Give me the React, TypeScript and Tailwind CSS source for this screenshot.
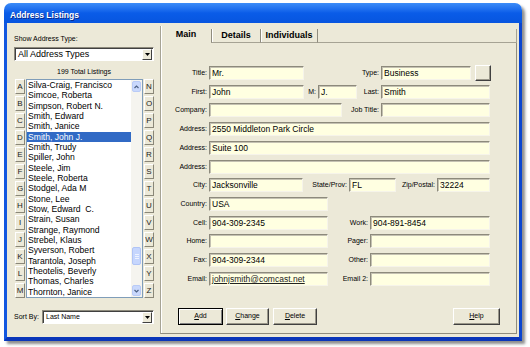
import React from 'react';

const names = [
  'Silva-Craig, Francisco',
  'Simcoe, Roberta',
  'Simpson, Robert N.',
  'Smith, Edward',
  'Smith, Janice',
  'Smith, John J.',
  'Smith, Trudy',
  'Spiller, John',
  'Steele, Jim',
  'Steele, Roberta',
  'Stodgel, Ada M',
  'Stone, Lee',
  'Stow, Edward  C.',
  'Strain, Susan',
  'Strange, Raymond',
  'Strebel, Klaus',
  'Syverson, Robert',
  'Tarantola, Joseph',
  'Theotelis, Beverly',
  'Thomas, Charles',
  'Thornton, Janice',
];

const leftLetters = 'ABCDEFGHIJKLM'.split('');
const rightLetters = 'NOPQRSTUVWXYZ'.split('');

function LetterButton({ letter }: { letter: string }) {
  return (
    <div className="flex h-[15px] w-[10px] items-center justify-center border border-t-white border-l-white border-b-[#8a8778] border-r-[#8a8778] bg-[#ece9d8] text-[8px] leading-none text-[#222]">
      {letter}
    </div>
  );
}

function Arrow() {
  return (
    <svg width="5" height="3" viewBox="0 0 5 3">
      <path d="M0 0h5L2.5 3z" fill="#000" />
    </svg>
  );
}

function Dropdown({ value, className }: { value: string; className: string }) {
  return (
    <div
      className={`flex h-[14px] items-center border border-t-[#8d8a7c] border-l-[#8d8a7c] border-b-white border-r-white bg-white shadow-[inset_1px_1px_0_#404040] ${className}`}
    >
      <span className="flex-1 truncate pl-[3px]">{value}</span>
      <span className="mr-px flex h-[11px] w-[10px] items-center justify-center border border-t-white border-l-white border-b-[#404040] border-r-[#404040] bg-[#ece9d8]">
        <Arrow />
      </span>
    </div>
  );
}

function Lbl({ className, children }: { className: string; children?: React.ReactNode }) {
  return (
    <span className={`shrink-0 whitespace-nowrap pr-[2px] text-right text-[7px] leading-[14px] text-black ${className}`}>
      {children}
    </span>
  );
}

function Field({ className, children }: { className: string; children?: React.ReactNode }) {
  return (
    <div
      className={`h-[14px] shrink-0 overflow-hidden whitespace-nowrap border border-t-[#8d8a7c] border-l-[#8d8a7c] border-b-[#f6f4ea] border-r-[#f6f4ea] bg-[#ffffe1] pl-[2px] text-[8.5px] leading-[12px] text-black shadow-[inset_1px_1px_0_#c4c1b2] ${className}`}
    >
      {children}
    </div>
  );
}

function Btn({ label, hot, primary, className }: { label: string; hot: string; primary?: boolean; className: string }) {
  const rest = label.slice(1);
  return (
    <div
      className={`flex h-[17px] items-center justify-center border text-[7px] text-black ${
        primary
          ? 'border-black shadow-[inset_1px_1px_0_#fff,inset_-1px_-1px_0_#808080]'
          : 'border-t-white border-l-white border-b-[#404040] border-r-[#404040] shadow-[inset_-1px_-1px_0_#9a978a]'
      } bg-[#ece9d8] ${className}`}
    >
      <span>
        <span className="underline">{hot}</span>
        {rest}
      </span>
    </div>
  );
}

export default function App() {
  return (
    <div className="h-[347px] w-[530px] overflow-hidden bg-white pl-[4px] pt-[3px] font-['Liberation_Sans',Arial,sans-serif]">
      <div className="flex h-[338px] w-[518px] flex-col rounded-t-[7px] shadow-[3px_3px_3px_rgba(0,0,0,0.45)]">
        {/* title bar */}
        <div className="flex h-[20px] items-center rounded-t-[7px] bg-gradient-to-b from-[#3c8cf8] via-[#0a5ce8] to-[#0755df] pl-[6px] pt-[4px]">
          <span className="text-[8.5px] font-bold text-white [text-shadow:1px_1px_0_#0a2a8a]">Address Listings</span>
        </div>

        {/* body */}
        <div className="flex flex-1 border-l-[3px] border-r-[3px] border-b-[4px] border-l-[#1257e0] border-r-[#0a45cf] border-b-[#0a36b9] bg-[#ece9d8]">
          {/* left panel */}
          <div className="flex w-[153px] shrink-0 flex-col pl-[7px] pt-[12px]">
            <div className="h-[8px] text-[7px] leading-[8px] text-black">Show Address Type:</div>
            <Dropdown value="All Address Types" className="mt-[4px] w-[140px] text-[9px] leading-[12px]" />
            <div className="mt-[7px] h-[8px] w-[140px] text-center text-[7px] leading-[8px] text-black">199 Total Listings</div>

            <div className="mt-[3px] ml-px flex h-[219px]">
              <div className="flex w-[10px] flex-col gap-[2px]">
                {leftLetters.map((l) => (
                  <LetterButton key={l} letter={l} />
                ))}
              </div>
              <div className="ml-px flex h-[219px] w-[117px] border border-t-[#7f9db9] border-l-[#7f9db9] border-b-[#7f9db9] border-r-[#7f9db9] bg-white">
                <div className="flex-1">
                  {names.map((n) => (
                    <div
                      key={n}
                      className={`h-[10.33px] whitespace-pre pl-px text-[8.6px] leading-[10.33px] ${
                        n === 'Smith, John J.' ? 'bg-[#316ac5] text-white' : 'text-black'
                      }`}
                    >
                      {n}
                    </div>
                  ))}
                </div>
                <div className="flex w-[11px] flex-col bg-[#f5f4ef] px-px">
                  <div className="mt-px flex h-[11px] items-center justify-center rounded-[2px] border border-[#b9cbf7] bg-[#c9d8fc]">
                    <svg width="5" height="4" viewBox="0 0 5 4">
                      <path d="M0.5 3L2.5 1L4.5 3" stroke="#4d6185" strokeWidth="1.2" fill="none" />
                    </svg>
                  </div>
                  <div className="mt-[155px] flex h-[18px] flex-col items-center justify-center gap-px rounded-[2px] border border-[#b0c4f6] bg-[#c6d6fd]">
                    <div className="h-px w-[4px] bg-[#eef3ff]" />
                    <div className="h-px w-[4px] bg-[#eef3ff]" />
                    <div className="h-px w-[4px] bg-[#eef3ff]" />
                  </div>
                  <div className="mt-auto mb-px flex h-[11px] items-center justify-center rounded-[2px] border border-[#b9cbf7] bg-[#c9d8fc]">
                    <svg width="5" height="4" viewBox="0 0 5 4">
                      <path d="M0.5 1L2.5 3L4.5 1" stroke="#4d6185" strokeWidth="1.2" fill="none" />
                    </svg>
                  </div>
                </div>
              </div>
              <div className="ml-px flex w-[10px] flex-col gap-[2px]">
                {rightLetters.map((l) => (
                  <LetterButton key={l} letter={l} />
                ))}
              </div>
            </div>

            <div className="mt-[12px] flex items-center">
              <span className="w-[28px] text-[7px] text-black">Sort By:</span>
              <Dropdown value="Last Name" className="w-[112px] text-[7px] leading-[12px]" />
            </div>
          </div>

          {/* right: tab control */}
          <div className="flex w-[357px] shrink-0 flex-col pt-[3px] pb-[3px]">
            <div className="flex h-[17px] items-end">
              <div className="flex h-[17px] w-[51px] items-center justify-center border-l border-l-[#a6a394] pt-px text-[9px] font-bold text-black shadow-[inset_1px_0_0_#fff]">
                Main
              </div>
              <div className="flex h-[14px] w-[49px] items-center justify-center border-l border-b border-l-[#8f8c7e] border-b-[#a6a394] text-[9px] font-bold text-black shadow-[inset_1px_0_0_#fff]">
                Details
              </div>
              <div className="flex h-[14px] w-[58px] items-center justify-center border-x border-b border-l-[#8f8c7e] border-r-[#8f8c7e] border-b-[#a6a394] text-[9px] font-bold text-black shadow-[inset_1px_0_0_#fff]">
                Individuals
              </div>
              <div className="h-[14px] flex-1 border-b border-r border-b-[#a6a394] border-r-[#a6a394]" />
            </div>

            <div className="flex flex-1 flex-col border-l border-r border-b border-l-[#a6a394] border-r-[#8f8c7e] border-b-[#8f8c7e] pt-[23px] shadow-[inset_1px_0_0_#fff]">
              <div className="flex flex-col gap-[4.73px]">
                <div className="flex h-[14px] items-center">
                  <Lbl className="w-[48px]">Title:</Lbl>
                  <Field className="w-[95px]">Mr.</Field>
                  <Lbl className="w-[77px]">Type:</Lbl>
                  <Field className="w-[90px]">Business</Field>
                  <div className="ml-[4px] h-[16px] w-[16px] shrink-0 border border-t-white border-l-white border-b-[#404040] border-r-[#404040] bg-[#ece9d8] shadow-[inset_-1px_-1px_0_#9a978a]" />
                </div>
                <div className="flex h-[14px] items-center">
                  <Lbl className="w-[48px]">First:</Lbl>
                  <Field className="w-[95px]">John</Field>
                  <Lbl className="w-[14px]">M:</Lbl>
                  <Field className="w-[39px]">J.</Field>
                  <Lbl className="w-[24px]">Last:</Lbl>
                  <Field className="w-[109px]">Smith</Field>
                </div>
                <div className="flex h-[14px] items-center">
                  <Lbl className="w-[48px]">Company:</Lbl>
                  <Field className="w-[133px]" />
                  <Lbl className="w-[39px]">Job Title:</Lbl>
                  <Field className="w-[109px]" />
                </div>
                <div className="flex h-[14px] items-center">
                  <Lbl className="w-[48px]">Address:</Lbl>
                  <Field className="w-[281px]">2550 Middleton Park Circle</Field>
                </div>
                <div className="flex h-[14px] items-center">
                  <Lbl className="w-[48px]">Address:</Lbl>
                  <Field className="w-[281px]">Suite 100</Field>
                </div>
                <div className="flex h-[14px] items-center">
                  <Lbl className="w-[48px]">Address:</Lbl>
                  <Field className="w-[281px]" />
                </div>
                <div className="flex h-[14px] items-center">
                  <Lbl className="w-[48px]">City:</Lbl>
                  <Field className="w-[94px]">Jacksonville</Field>
                  <Lbl className="w-[46px]">State/Prov:</Lbl>
                  <Field className="w-[47px]">FL</Field>
                  <Lbl className="w-[41px]">Zip/Postal:</Lbl>
                  <Field className="w-[53px]">32224</Field>
                </div>
                <div className="flex h-[14px] items-center">
                  <Lbl className="w-[48px]">Country:</Lbl>
                  <Field className="w-[119px]">USA</Field>
                </div>
                <div className="flex h-[14px] items-center">
                  <Lbl className="w-[48px]">Cell:</Lbl>
                  <Field className="w-[119px]">904-309-2345</Field>
                  <Lbl className="w-[42px]">Work:</Lbl>
                  <Field className="w-[120px]">904-891-8454</Field>
                </div>
                <div className="flex h-[14px] items-center">
                  <Lbl className="w-[48px]">Home:</Lbl>
                  <Field className="w-[119px]" />
                  <Lbl className="w-[42px]">Pager:</Lbl>
                  <Field className="w-[120px]" />
                </div>
                <div className="flex h-[14px] items-center">
                  <Lbl className="w-[48px]">Fax:</Lbl>
                  <Field className="w-[119px]">904-309-2344</Field>
                  <Lbl className="w-[42px]">Other:</Lbl>
                  <Field className="w-[120px]" />
                </div>
                <div className="flex h-[14px] items-center">
                  <Lbl className="w-[48px]">Email:</Lbl>
                  <Field className="w-[119px]">
                    <span className="text-[#222] underline">johnjsmith@comcast.net</span>
                  </Field>
                  <Lbl className="w-[42px]">Email 2:</Lbl>
                  <Field className="w-[120px]" />
                </div>
              </div>

              <div className="mt-[22px] flex items-center pl-[17px] pr-[16px]">
                <Btn label="Add" hot="A" primary className="w-[45px]" />
                <Btn label="Change" hot="C" className="ml-[3px] w-[43px]" />
                <Btn label="Delete" hot="D" className="ml-[4px] w-[44px]" />
                <Btn label="Help" hot="H" className="ml-auto w-[47px]" />
              </div>
            </div>
          </div>
          <div className="w-[2px] shrink-0" />
        </div>
      </div>
    </div>
  );
}
